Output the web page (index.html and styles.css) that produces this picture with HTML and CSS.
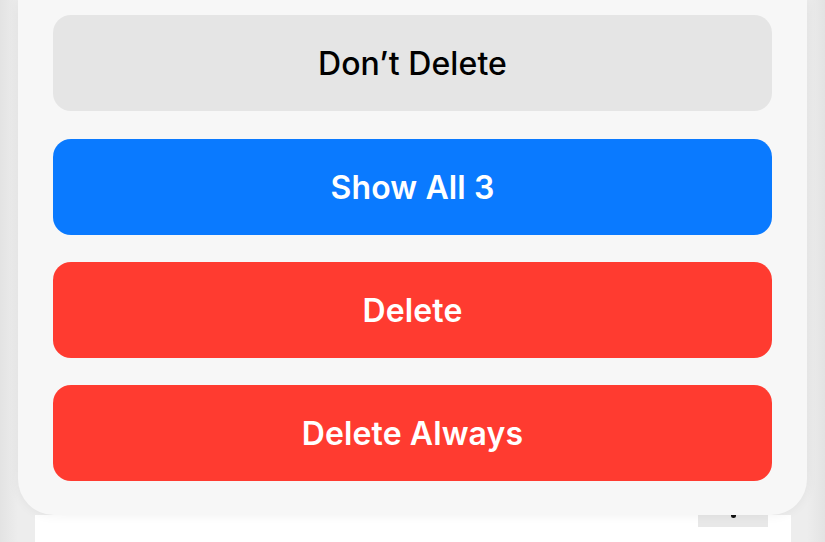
FILE: index.html
```html
<!DOCTYPE html>
<html lang="en">
<head>
<meta charset="utf-8">
<title>Delete dialog</title>
<link rel="stylesheet" href="styles.css">
</head>
<body>
<div class="screen">
  <div class="sheet">
    <button class="action action-neutral">Don’t Delete</button>
    <button class="action action-primary">Show All 3</button>
    <button class="action action-danger">Delete</button>
    <button class="action action-danger">Delete Always</button>
  </div>
  <div class="behind">
    <div class="behind-tab"><span class="dot"></span></div>
  </div>
</div>
</body>
</html>
```

FILE: styles.css
```css
html, body {
  margin: 0;
  padding: 0;
}
body {
  background: #e6e6e6;
  font-family: Inter, "Open Sans", sans-serif;
  width: 825px;
  height: 542px;
  overflow: hidden;
}
.screen {
  display: flex;
  flex-direction: column;
  height: 542px;
  background: linear-gradient(90deg, #e3e3e3 0px, #ededed 18px, #ededed 807px, #e3e3e3 825px);
}
.sheet {
  position: relative;
  z-index: 2;
  margin: 0 18px;
  padding: 15px 35px 34px;
  background: #f7f7f7;
  border-radius: 0 0 36px 36px;
  box-shadow: 0 0 12px rgba(0, 0, 0, 0.06);
  display: flex;
  flex-direction: column;
  gap: 27px;
}
.action {
  height: 96px;
  border: none;
  border-radius: 18px;
  font-family: Inter, "Open Sans", sans-serif;
  font-size: 32px;
  font-weight: 600;
  letter-spacing: 0.1px;
  padding: 0;
  margin: 0;
  display: flex;
  align-items: center;
  justify-content: center;
}
.action:first-child {
  margin-bottom: 1px;
}
.action-neutral {
  background: #e5e5e5;
  color: #000;
  font-weight: 500;
}
.action-primary {
  background: #0a7aff;
  color: #fff;
}
.action-danger {
  background: #ff3b30;
  color: #fff;
}
.behind {
  margin: 0 34px 0 35px;
  flex: 1;
  background: #ffffff;
  position: relative;
  display: flex;
  justify-content: flex-end;
  padding-right: 23px;
}
.behind-tab {
  width: 70px;
  height: 12px;
  background: #e8e8e8;
  position: relative;
}
.dot {
  position: absolute;
  left: 33px;
  top: 0;
  width: 5px;
  height: 3px;
  border-radius: 0 0 3px 3px;
  background: #111;
}
```
